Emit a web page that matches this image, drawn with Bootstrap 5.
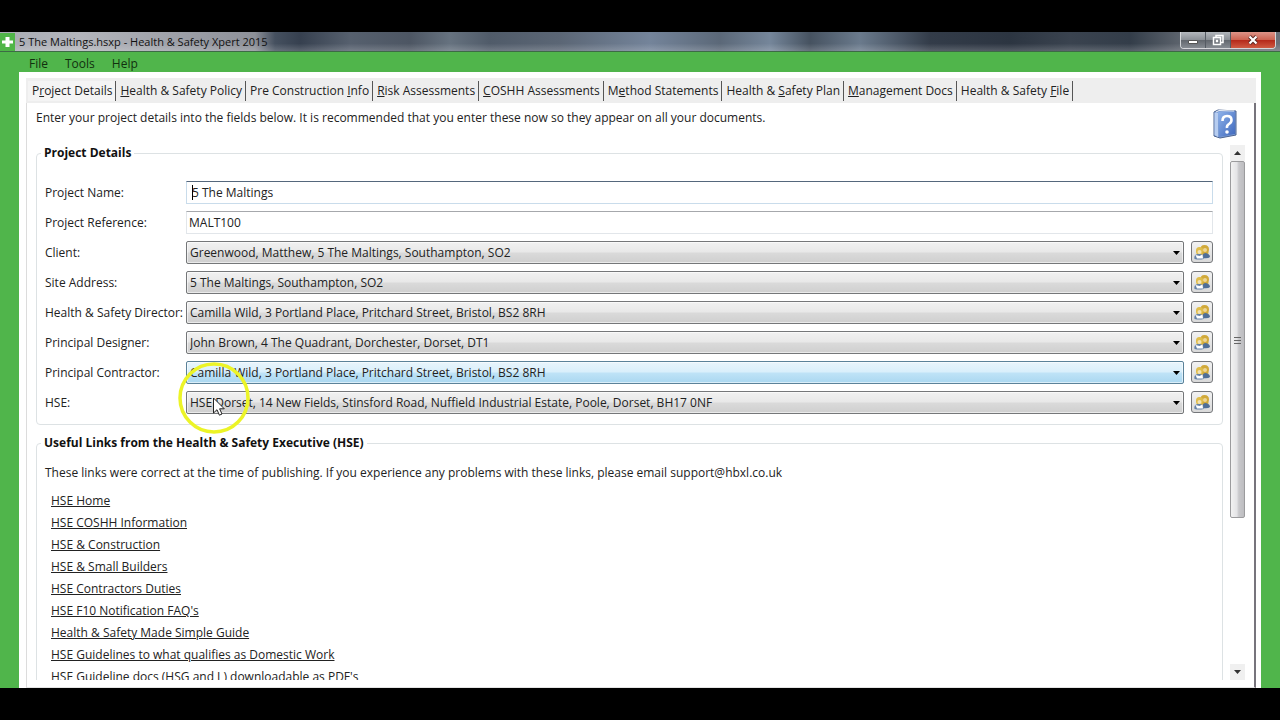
<!DOCTYPE html>
<html lang="en">
<head>
<meta charset="utf-8">
<meta name="viewport" content="width=device-width, initial-scale=1">
<title>5 The Maltings.hsxp - Health &amp; Safety Xpert 2015</title>
<link href="https://cdn.jsdelivr.net/npm/bootstrap@5.3.0/dist/css/bootstrap.min.css" rel="stylesheet">
<style>
body { font-family: "Open Sans", "Noto Sans", sans-serif; font-size: 12px; line-height: 20px; color: #222; background: #000; padding: 32px 0; }
a { color: inherit; }
.title-bar { height: 20px; border-bottom: 1px solid #3c6b45; color: #111;
  background: linear-gradient(#0000 60%, #ffffff30), linear-gradient(90deg, #a9acb4 0, #b3b5bb 80px, #9a9da5 190px, #8d9098 255px, #45505f 275px, #36404f 300px, #56606e 350px, #4d5663 410px, #66727f 450px, #505b69 490px, #5b6675 560px, #74849a 650px, #5b6878 720px, #75869a 770px, #465260 810px, #6a7a8c 860px, #333c49 930px, #2c3541 1010px, #3a434f 1070px, #333d49 1130px, #5c636c 1180px, #6b7078 100%); }
.app-icon { width: 15px; height: 19px; }
.title-text { font-size: 11px; line-height: 20px; }
.win-btns { height: 17px; border: 1px solid #d5d7da; border-top: 0; border-radius: 0 0 4px 4px; overflow: hidden; }
.win-btns button { border: 0; border-right: 1px solid #555b63; padding: 0; width: 25px; display: flex; align-items: center; justify-content: center; background: linear-gradient(#b3b7bc, #8b9096 48%, #62676e 52%, #868b92); }
.win-btns .win-close { width: 44px; border-right: 0; background: linear-gradient(#dd9488, #cd6351 48%, #b5291a 52%, #cf5a42); }
.app-frame { background: #50b54b; padding: 0 19px; }
.menu-bar { height: 20px; padding-left: 10px; gap: 17px; }
.menu-bar a { color: #12300f; line-height: 23px; }
.sheet { background: #fff; padding: 6px 5px 0 7px; }
.tab-strip { background: #eee; height: 25px; padding: 3px 0 0 2px; }
.tab-strip .nav-link { color: #222; padding: 0 3px 0 4px; border-right: 1px solid #555; line-height: 20px; height: 20px; white-space: nowrap; }
.tab-strip .active { background: #f4f4f4; }
.page-pane { border-left: 1px solid #dcdcdc; border-right: 2px solid #77747c; border-bottom: 1px solid #e4e4e4; padding: 0 9px 7px 9px; }
.intro { height: 40px; padding-top: 5px; }
.help-btn { width: 24px; height: 32px; margin-right: 8px; }
.scroll-view { overflow: hidden; gap: 7px; }
.group-box { border: 1px solid #dde2e4; border-radius: 4px; padding: 0 9px 10px 8px; }
.group-box legend { float: none; width: auto; font-size: 12px; line-height: 20px; font-weight: 700; color: #111; margin: 0 0 0 -4px; padding: 0 3px; }
.group-box p { margin: 10px 0 0; }
.field-list { margin-top: 18px; gap: 7px; }
.field-row { height: 23px; }
.field-row label { width: 141px; white-space: nowrap; line-height: 24px; }
.field-row input { width: 100%; height: 23px; border: 1px solid #e2e6ea; border-top-color: #a6a8ac; padding: 0 2px; color: #222; line-height: 20px; background: #fff; }
.field-row .has-caret input { border-color: #c9dceb; border-top-color: #55677c; padding-left: 5px; }
.has-caret::after { content: ""; position: absolute; left: 6px; top: 4px; width: 1px; height: 15px; background: #000; }
.field-row select { appearance: none; height: 23px; border: 1px solid #757779; border-radius: 2px; padding: 0 20px 0 3px; color: #222;
  background: url("data:image/svg+xml,%3Csvg xmlns='http://www.w3.org/2000/svg' width='7' height='4'%3E%3Cpath d='M0 0h7L3.500 4z'/%3E%3C/svg%3E") no-repeat right 3px center, linear-gradient(#f1f1f1, #e8e8e8 48%, #dadada 52%, #cfcfcf); box-shadow: inset 0 0 0 1px #ffffff90; }
.field-row select.is-hot { border-color: #5b8299; background: url("data:image/svg+xml,%3Csvg xmlns='http://www.w3.org/2000/svg' width='7' height='4'%3E%3Cpath d='M0 0h7L3.500 4z'/%3E%3C/svg%3E") no-repeat right 3px center, linear-gradient(#e8f5fc, #d9effb 48%, #bfe3f7 52%, #aad7f0); }
.pick-btn { width: 22px; height: 22px; margin-left: 7px; border: 1px solid #74767a; border-radius: 3px; background: linear-gradient(#f2f2f2, #d9d9d9); }
.pointer { position: absolute; left: 133px; top: -29px; width: 72px; height: 72px; pointer-events: none; }
.link-list { padding-left: 6px; margin-top: 7px; }
.link-list li { line-height: 22px; height: 22px; }
.scroll-bar { width: 15px; margin-top: 2px; }
.scroll-bar button { border: 0; padding: 0; height: 16px; background: #f0f0f0; display: flex; align-items: center; justify-content: center; }
.scroll-thumb { height: 71%; border: 1px solid #9b9b9d; border-radius: 2px; background: linear-gradient(90deg, #f2f2f2, #e4e4e6 45%, #c8c8cb 60%, #bdbdc0); }
</style>
</head>
<body class="d-flex flex-column vh-100 overflow-hidden">
<svg class="d-none" aria-hidden="true">
  <symbol id="people" viewBox="0 0 18 18">
    <path d="M7.500 7q-.5-5 4-5t4.500 4.500L15 12H8z" fill="#d1a93a"/><circle cx="12" cy="7" r="2" fill="#ecd596"/>
    <path d="M9 15q0-5 4-5 4 1 4 4-2 2-8 1z" fill="#4f6f98"/>
    <path d="M3 9q-.5-5 3.500-5T10 8l-1 4H4z" fill="#dfbd4b"/><circle cx="6.500" cy="9" r="2" fill="#f3e3b4"/>
    <path d="M1.500 16q-1-4 3-5h3q4 1 3 5-4 1-9 0z" fill="#6683a8"/><path d="M2.500 12l4 1 3-1.500.5 4H4z" fill="#fff"/>
  </symbol>
</svg>

<header class="title-bar d-flex flex-shrink-0">
  <svg class="app-icon" viewBox="0 0 15 19"><path fill="#4fb548" d="M0 1h15v18H0z"/><path fill="#fff" d="M5.500 5h4v3.500H13v3H9.500V15h-4v-3.500H2v-3h3.500z"/></svg>
  <span class="title-text ms-1">5 The Maltings.hsxp - Health &amp; Safety Xpert 2015</span>
  <div class="win-btns d-flex ms-auto me-1">
    <button aria-label="Minimize"><svg width="12" height="12"><path d="M1.500 6.500h9v3h-9z" fill="#fff" stroke="#555"/></svg></button>
    <button aria-label="Restore"><svg width="12" height="12" fill="none" stroke="#fff" stroke-width="1.500"><path d="M4 3V1.500h7v7H9M1.500 3.500h7v7h-7z"/><path d="M4.500 6.500h1v1h-1z"/></svg></button>
    <button class="win-close" aria-label="Close"><svg width="12" height="10"><path d="M2.500 1.500l7 7m0-7l-7 7" stroke="#5d2a25" stroke-width="4"/><path d="M2.500 1.500l7 7m0-7l-7 7" stroke="#fff" stroke-width="2.200"/></svg></button>
  </div>
</header>

<div class="app-frame d-flex flex-column flex-grow-1 overflow-hidden">
  <nav class="menu-bar d-flex flex-shrink-0">
    <a class="text-decoration-none" href="#">File</a>
    <a class="text-decoration-none" href="#">Tools</a>
    <a class="text-decoration-none" href="#">Help</a>
  </nav>

  <main class="sheet d-flex flex-column flex-grow-1 overflow-hidden">
    <nav class="tab-strip nav flex-nowrap flex-shrink-0">
      <a class="nav-link active" href="#">P<u>r</u>oject Details</a>
      <a class="nav-link" href="#"><u>H</u>ealth &amp; Safety Policy</a>
      <a class="nav-link" href="#">Pre Construction <u>I</u>nfo</a>
      <a class="nav-link" href="#"><u>R</u>isk Assessments</a>
      <a class="nav-link" href="#"><u>C</u>OSHH Assessments</a>
      <a class="nav-link" href="#">M<u>e</u>thod Statements</a>
      <a class="nav-link" href="#">Health &amp; <u>S</u>afety Plan</a>
      <a class="nav-link" href="#"><u>M</u>anagement Docs</a>
      <a class="nav-link" href="#">Health &amp; Safety <u>F</u>ile</a>
    </nav>

    <div class="page-pane d-flex flex-column flex-grow-1 overflow-hidden">
      <div class="intro d-flex justify-content-between flex-shrink-0">
        <span>Enter your project details into the fields below. It is recommended that you enter these now so they appear on all your documents.</span>
        <button class="help-btn border-0 p-0 bg-transparent" aria-label="Help">
          <svg class="d-block" width="24" height="30" viewBox="0 0 24 30">
            <defs><linearGradient id="cover" x2="1" y2="1"><stop stop-color="#8fb3ea"/><stop offset="1" stop-color="#3f68bd"/></linearGradient></defs>
            <path d="M1 3l4-2 18 1v24L7 29l-6-2z" fill="#7e9fd6" stroke="#4b6390"/>
            <path d="M5 3l17-1v23L6 28z" fill="url(#cover)"/>
            <path d="M1.500 3.500L5 4v24l-3.500-2z" fill="#b7cdf0"/><path d="M3 3l3-1.500 15 .5" stroke="#e8eef8" fill="none"/>
            <path d="M9.500 12q0-5 4.500-5t4.500 4q0 2.500-2.500 4t-2 4" fill="none" stroke="#fff" stroke-width="2.600"/><circle cx="14" cy="23" r="1.800" fill="#fff"/>
          </svg>
        </button>
      </div>

      <div class="scroll-view d-flex flex-grow-1">
        <div class="flex-grow-1">
          <fieldset class="group-box">
            <legend>Project Details</legend>
            <div class="field-list d-flex flex-column">
              <div class="field-row d-flex"><label for="name">Project Name:</label><div class="has-caret position-relative flex-grow-1"><input id="name" type="text" value="5 The Maltings"></div></div>
              <div class="field-row d-flex"><label for="ref">Project Reference:</label><div class="flex-grow-1"><input id="ref" type="text" value="MALT100"></div></div>
              <div class="field-row d-flex"><label for="client">Client:</label><select id="client" class="flex-grow-1"><option>Greenwood, Matthew, 5 The Maltings, Southampton, SO2</option></select><button class="pick-btn p-0" aria-label="Choose client"><svg class="d-block m-auto" width="18" height="18"><use href="#people"/></svg></button></div>
              <div class="field-row d-flex"><label for="site">Site Address:</label><select id="site" class="flex-grow-1"><option>5 The Maltings, Southampton, SO2</option></select><button class="pick-btn p-0" aria-label="Choose site address"><svg class="d-block m-auto" width="18" height="18"><use href="#people"/></svg></button></div>
              <div class="field-row d-flex"><label for="director">Health &amp; Safety Director:</label><select id="director" class="flex-grow-1"><option>Camilla Wild, 3 Portland Place, Pritchard Street, Bristol, BS2 8RH</option></select><button class="pick-btn p-0" aria-label="Choose director"><svg class="d-block m-auto" width="18" height="18"><use href="#people"/></svg></button></div>
              <div class="field-row d-flex"><label for="designer">Principal Designer:</label><select id="designer" class="flex-grow-1"><option>John Brown, 4 The Quadrant, Dorchester, Dorset, DT1</option></select><button class="pick-btn p-0" aria-label="Choose designer"><svg class="d-block m-auto" width="18" height="18"><use href="#people"/></svg></button></div>
              <div class="field-row d-flex"><label for="contractor">Principal Contractor:</label><select id="contractor" class="is-hot flex-grow-1"><option>Camilla Wild, 3 Portland Place, Pritchard Street, Bristol, BS2 8RH</option></select><button class="pick-btn p-0" aria-label="Choose contractor"><svg class="d-block m-auto" width="18" height="18"><use href="#people"/></svg></button></div>
              <div class="field-row d-flex position-relative"><label for="hse">HSE:</label><select id="hse" class="flex-grow-1"><option>HSE Dorset, 14 New Fields, Stinsford Road, Nuffield Industrial Estate, Poole, Dorset, BH17 0NF</option></select><button class="pick-btn p-0" aria-label="Choose HSE office"><svg class="d-block m-auto" width="18" height="18"><use href="#people"/></svg></button>
                <svg class="pointer" viewBox="0 0 72 72"><circle cx="36" cy="36" r="34" fill="none" stroke="#ecf427" stroke-width="3.500"/><path d="M35.500 36v15l3.500-3.300 2.400 5.500 2.600-1.200-2.400-5.200h4.700z" fill="#fff" stroke="#222"/></svg>
              </div>
            </div>
          </fieldset>

          <fieldset class="group-box mt-2">
            <legend>Useful Links from the Health &amp; Safety Executive (HSE)</legend>
            <p>These links were correct at the time of publishing. If you experience any problems with these links, please email support@hbxl.co.uk</p>
            <ul class="link-list list-unstyled mb-0">
              <li><a href="#">HSE Home</a></li>
              <li><a href="#">HSE COSHH Information</a></li>
              <li><a href="#">HSE &amp; Construction</a></li>
              <li><a href="#">HSE &amp; Small Builders</a></li>
              <li><a href="#">HSE Contractors Duties</a></li>
              <li><a href="#">HSE F10 Notification FAQ's</a></li>
              <li><a href="#">Health &amp; Safety Made Simple Guide</a></li>
              <li><a href="#">HSE Guidelines to what qualifies as Domestic Work</a></li>
              <li><a href="#">HSE Guideline docs (HSG and L) downloadable as PDF's</a></li>
            </ul>
          </fieldset>
        </div>
        <div class="scroll-bar d-flex flex-column flex-shrink-0">
          <button class="flex-shrink-0" aria-label="Scroll up"><svg width="7" height="4"><path d="M0 4h7L3.500 0z" fill="#333"/></svg></button>
          <div class="flex-grow-1"><div class="scroll-thumb d-flex align-items-center justify-content-center"><svg width="7" height="8" stroke="#666"><path d="M0 1.500h7M0 4.500h7M0 7.500h7"/></svg></div></div>
          <button class="flex-shrink-0" aria-label="Scroll down"><svg width="7" height="4"><path d="M0 0h7L3.500 4z" fill="#333"/></svg></button>
        </div>
      </div>
    </div>
  </main>
</div>
<script src="https://cdn.jsdelivr.net/npm/bootstrap@5.3.0/dist/js/bootstrap.bundle.min.js"></script>
</body>
</html>
